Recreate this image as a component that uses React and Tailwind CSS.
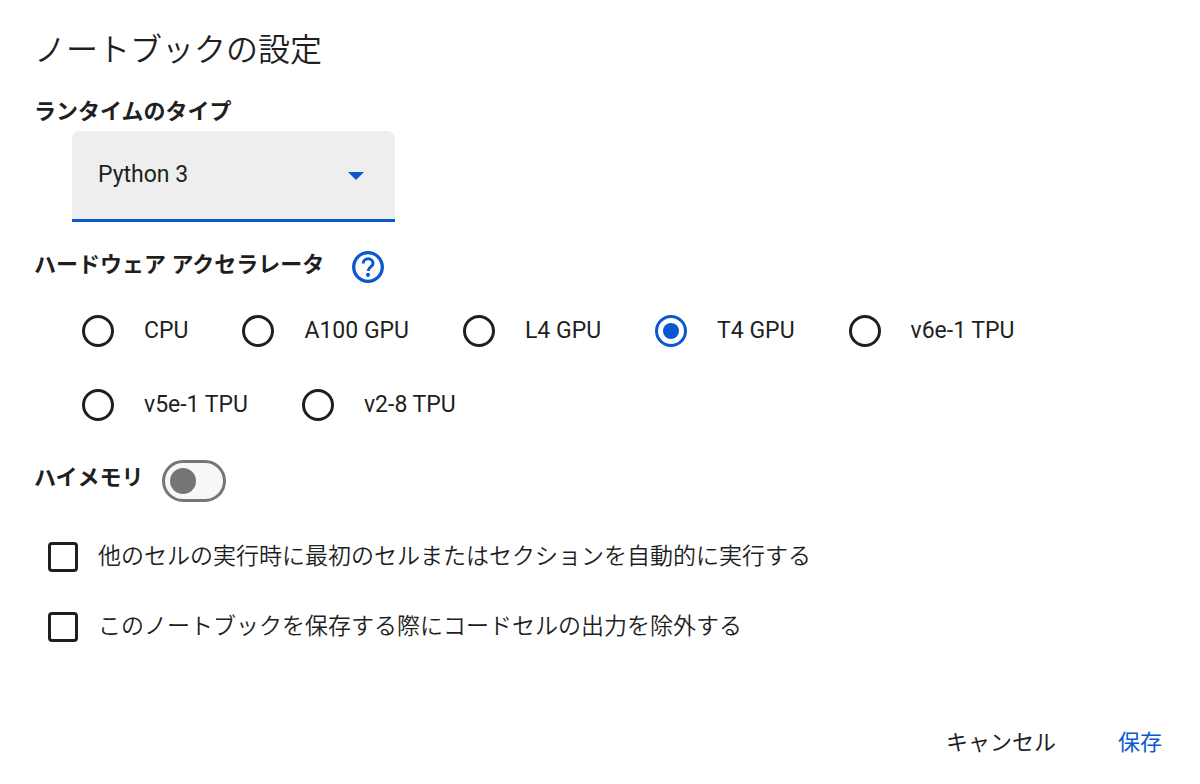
import React, { useState } from "react";

const ACCELERATORS = ["CPU", "A100 GPU", "L4 GPU", "T4 GPU", "v6e-1 TPU", "v5e-1 TPU", "v2-8 TPU"];

function HelpIcon() {
  return (
    <svg viewBox="0 0 32 32" className="size-8" fill="none" stroke="currentColor" strokeWidth="3.3" aria-hidden="true">
      <circle cx="16" cy="16" r="14.3" />
      <path d="M11.2 12.4a4.9 4.7 0 0 1 9.8 0c0 3.4-4.8 3.8-4.8 7.6" strokeWidth="3" />
      <circle cx="16" cy="23.8" r="2.1" fill="currentColor" stroke="none" />
    </svg>
  );
}

function AcceleratorOption({ name, checked, onChange }) {
  return (
    <label className="flex items-center gap-[30px] h-8 cursor-pointer">
      <input
        type="radio"
        name="accelerator"
        value={name}
        checked={checked}
        onChange={onChange}
        className="appearance-none grid place-content-center size-8 shrink-0 rounded-full border-3 border-[#1f1f1f] checked:border-[#0b57d0] before:size-4 before:rounded-full checked:before:bg-[#0b57d0]"
      />
      <span className="text-[23px] leading-8">{name}</span>
    </label>
  );
}

function CheckOption({ children, checked, onChange }) {
  return (
    <label className="flex items-center gap-5 cursor-pointer">
      <input
        type="checkbox"
        checked={checked}
        onChange={onChange}
        className="appearance-none size-[30px] shrink-0 rounded-sm border-3 border-[#1f1f1f] checked:bg-[#0b57d0]"
      />
      <span className="text-[23px] leading-7 font-[350]">{children}</span>
    </label>
  );
}

function App() {
  const [runtime, setRuntime] = useState("python3");
  const [accelerator, setAccelerator] = useState("T4 GPU");
  const [highMemory, setHighMemory] = useState(false);
  const [autoRun, setAutoRun] = useState(false);
  const [omitOutput, setOmitOutput] = useState(false);

  return (
    <main className="min-h-screen bg-white px-[34px] pt-[30px] pb-6 font-[Roboto,'Noto_Sans_CJK_JP',sans-serif] text-[#1f1f1f]">
      <h1 className="text-[32px] leading-10 font-[350]">ノートブックの設定</h1>

      {/* Runtime type */}
      <label htmlFor="runtime" className="mt-7 block text-[22px] leading-7 font-bold">
        ランタイムのタイプ
      </label>
      <div className="relative mt-[5px] ml-[38px] max-w-[323px]">
        <select
          id="runtime"
          value={runtime}
          onChange={(e) => setRuntime(e.target.value)}
          className="appearance-none block w-full h-[91px] rounded-t-lg border-b-3 border-[#0b57d0] bg-[#eeeeee] pl-[26px] pr-14 text-[23px] outline-none"
        >
          <option value="python3">Python 3</option>
          <option value="r">R</option>
        </select>
        <svg viewBox="0 0 16 8" className="pointer-events-none absolute right-[31px] top-[41px] h-2 w-4 fill-[#0b57d0]" aria-hidden="true">
          <path d="M0 0h16L8 8z" />
        </svg>
      </div>

      {/* Hardware accelerator */}
      <div className="mt-[29px] flex items-start gap-7">
        <h2 id="accelerator-title" className="text-[22px] leading-7 font-bold">
          ハードウェア アクセラレータ
        </h2>
        <button type="button" aria-label="ヘルプ" className="text-[#0b57d0]">
          <HelpIcon />
        </button>
      </div>
      <div role="radiogroup" aria-labelledby="accelerator-title" className="mt-8 ml-12 flex flex-wrap gap-x-[54px] gap-y-[42px]">
        {ACCELERATORS.map((name) => (
          <AcceleratorOption
            key={name}
            name={name}
            checked={accelerator === name}
            onChange={() => setAccelerator(name)}
          />
        ))}
      </div>

      {/* High memory */}
      <div className="mt-[39px] flex items-start gap-[18px]">
        <label htmlFor="high-memory" className="text-[22px] leading-9 font-bold">
          ハイメモリ
        </label>
        <input
          id="high-memory"
          type="checkbox"
          role="switch"
          checked={highMemory}
          onChange={(e) => setHighMemory(e.target.checked)}
          className="appearance-none flex items-center h-[42px] w-16 rounded-full border-3 border-[#757575] bg-[#f7f7f7] px-[5px] before:size-[26px] before:rounded-full before:bg-[#757575] checked:justify-end"
        />
      </div>

      <div className="mt-10 ml-[14px] flex flex-col gap-10">
        <CheckOption checked={autoRun} onChange={(e) => setAutoRun(e.target.checked)}>
          他のセルの実行時に最初のセルまたはセクションを自動的に実行する
        </CheckOption>
        <CheckOption checked={omitOutput} onChange={(e) => setOmitOutput(e.target.checked)}>
          このノートブックを保存する際にコードセルの出力を除外する
        </CheckOption>
      </div>

      <div className="mt-[85px] flex justify-end gap-[62px] pr-1 text-[22px] leading-8">
        <button type="button">キャンセル</button>
        <button type="button" className="text-[#0b57d0]">保存</button>
      </div>
    </main>
  );
}

export default App;
